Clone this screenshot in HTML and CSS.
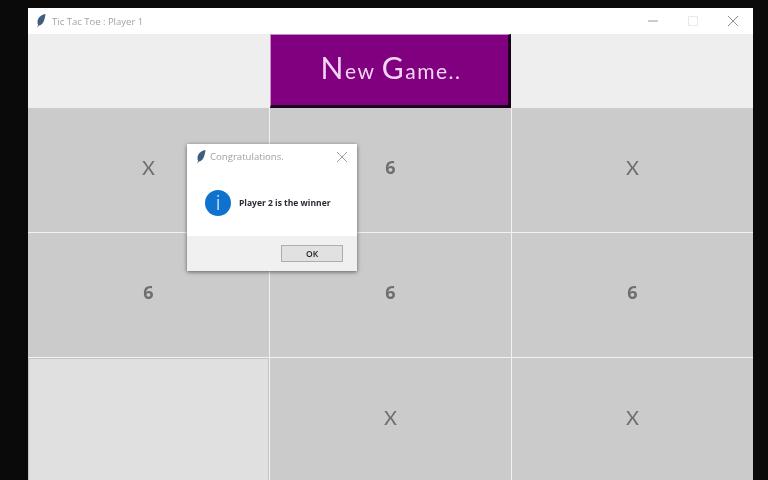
FILE: index.html
```html
<!DOCTYPE html>
<html>
  <head>
    <link rel="stylesheet" href="styles.css">
  </head>
  <body>
    <div class="window">
      <div class="titlebar">
        <svg class="feather" width="10" height="14" viewBox="0 0 10 14"><path d="M9.500 0C5 .5 1.500 4 1.500 8c0 1 .2 2 .7 3L1 14l2-2.500C6.500 11 8.500 8 9.500 0z" fill="#3f5f80"/></svg>
        <span class="title">Tic Tac Toe : Player 1</span>
        <div class="winbtns">
          <svg width="10" height="10" viewBox="0 0 10 10"><path d="M0 5h10" stroke="#9a9a9a"/></svg>
          <svg width="10" height="10" viewBox="0 0 10 10"><path d="M.5.500h9v9h-9z" fill="none" stroke="#e8e8e8"/></svg>
          <svg width="10" height="10" viewBox="0 0 10 10"><path d="M0 0l10 10M10 0L0 10" stroke="#909090"/></svg>
        </div>
      </div>
      <div class="toprow">
        <div></div>
        <div class="newgame"><span class="big">N</span>ew <span class="big">G</span>ame..</div>
        <div></div>
      </div>
      <div class="board">
        <div class="cell">X</div>
        <div class="cell nought">6</div>
        <div class="cell">X</div>
        <div class="cell nought">6</div>
        <div class="cell nought">6</div>
        <div class="cell nought">6</div>
        <div class="cell empty"></div>
        <div class="cell">X</div>
        <div class="cell">X</div>
      </div>
    </div>

    <div class="dialog">
      <div class="dlgtitle">
        <svg class="feather" width="10" height="14" viewBox="0 0 10 14"><path d="M9.500 0C5 .5 1.500 4 1.500 8c0 1 .2 2 .7 3L1 14l2-2.500C6.500 11 8.500 8 9.500 0z" fill="#3f5f80"/></svg>
        <span>Congratulations.</span>
        <svg class="dlgclose" width="10" height="10" viewBox="0 0 10 10"><path d="M0 0l10 10M10 0L0 10" stroke="#a0a0a0"/></svg>
      </div>
      <div class="dlgbody">
        <div class="infoicon">i</div>
        <span>Player 2 is the winner</span>
      </div>
      <div class="dlgfoot">
        <div class="okbtn">OK</div>
      </div>
    </div>
  </body>
</html>
```

FILE: styles.css
```css
html, body {
  height: 100%;
  overflow: hidden;
}
body {
  margin: 0;
  background: #0a0a0a;
  padding: 8px 15px 0 28px;
  box-sizing: border-box;
  font-family: "Open Sans", "Liberation Sans", sans-serif;
}

.window {
  background: #eeeeee;
  height: 490px;
  display: flex;
  flex-direction: column;
  filter: blur(.4px);
}
.titlebar {
  height: 26px;
  flex: none;
  background: #fff;
  display: flex;
  align-items: center;
  padding-left: 8px;
  color: #a2a2a2;
  font-size: 9.500px;
}
.title {
  margin-left: 6px;
}
.winbtns {
  margin-left: auto;
  display: flex;
  gap: 30px;
  padding-right: 15px;
}

.toprow {
  height: 74px;
  flex: none;
  display: grid;
  grid-template-columns: 242px 241px 242px;
}
.newgame {
  background: #800080;
  color: #f3d6f3;
  border-style: solid;
  border-width: 1px 3px 3px 1px;
  border-color: #c88ac8 #1a001a #1a001a #c88ac8;
  padding-left: 3px;
  display: flex;
  align-items: baseline;
  justify-content: center;
  white-space: pre;
  font-family: "Lato", sans-serif;
  font-weight: 400;
  font-size: 21px;
  letter-spacing: 1.500px;
  line-height: 65px;
}
.big {
  font-size: 30px;
}

.board {
  flex: 1;
  display: grid;
  grid-template-columns: 241px 241px 241px;
  grid-template-rows: 124px 124px 124px;
  gap: 1px;
  background: #f2f2f2;
}
.cell {
  background: #cbcbcb;
  display: flex;
  align-items: center;
  justify-content: center;
  color: #6f6f6f;
  font-size: 20px;
  padding-bottom: 6px;
  box-sizing: border-box;
  font-family: "Lato", sans-serif;
  font-weight: 400;
}
.nought {
  font-family: "Open Sans", sans-serif;
  font-weight: 700;
  font-size: 18px;
}
.empty {
  background: #e0e0e0;
  border: 1px solid #c4c4c4;
}

.dialog {
  position: absolute;
  left: 187px;
  top: 144px;
  width: 170px;
  height: 127px;
  display: flex;
  flex-direction: column;
  background: #fff;
  box-shadow: 0 1px 4px rgba(0, 0, 0, .55);
  filter: blur(.3px);
}
.dlgtitle {
  height: 25px;
  display: flex;
  align-items: center;
  padding: 0 10px 0 9px;
  gap: 4px;
  color: #a0a0a0;
  font-size: 9.600px;
}
.dlgclose {
  margin-left: auto;
}
.dlgbody {
  flex: 1;
  display: flex;
  align-items: center;
  padding-left: 18px;
  gap: 8px;
  color: #2a2a35;
  font-size: 8.500px;
  font-weight: 700;
}
.infoicon {
  width: 26px;
  height: 26px;
  border-radius: 50%;
  background: #0f72cf;
  color: #fff;
  text-align: center;
  line-height: 25px;
  font-size: 21px;
  font-weight: 300;
}
.dlgfoot {
  height: 35px;
  background: #f0f0f0;
  display: flex;
  justify-content: flex-end;
  padding: 9px 14px 0 0;
  box-sizing: border-box;
}
.okbtn {
  width: 62px;
  height: 17px;
  box-sizing: border-box;
  background: #e1e1e1;
  border: 1px solid #adadad;
  text-align: center;
  line-height: 15px;
  font-size: 8.500px;
  font-weight: 600;
  color: #222;
}
```
